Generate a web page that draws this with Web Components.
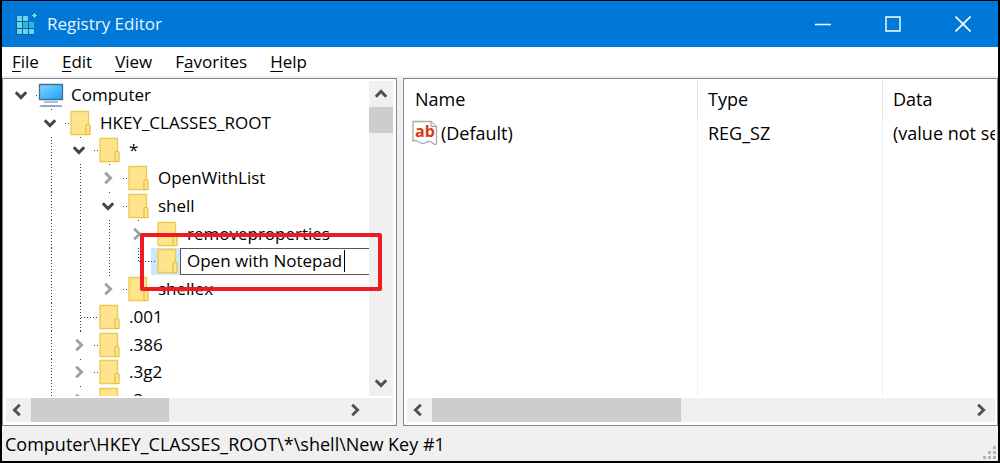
<!DOCTYPE html>
<html lang="en">
<head>
<meta charset="utf-8">
<title>Registry Editor</title>
<style>
html, body { height: 100%; margin: 0; }
body { font: 18px/24px "Open Sans", "Noto Sans", sans-serif; color: #000; }
</style>
</head>
<body>
<reg-window></reg-window>
<script>
const define = (name, html, setup) => customElements.define(name, class extends HTMLElement {
  constructor() {
    super();
    this.attachShadow({ mode: 'open' }).innerHTML = html;
  }
  connectedCallback() { if (setup) setup.call(this, this.shadowRoot); }
});

/* Chevron: direction up, down, left or right */
define('reg-chevron', `
<style>
:host { display: block; width: 14px; height: 14px; color: #505050; }
svg { display: block; }
:host([dir=right]) svg { transform: rotate(90deg); }
:host([dir=down]) svg { transform: rotate(180deg); }
:host([dir=left]) svg { transform: rotate(270deg); }
</style>
<svg width="14" height="14" viewBox="0 0 14 14" fill="none" stroke="currentColor" stroke-width="2.9"><path d="M1.8 9.8 7 4.4l5.2 5.4"/></svg>`);

define('reg-titlebar', `
<style>
:host { display: flex; align-items: center; height: 46px; background: #0078d7; color: #fff; padding-left: 12px; box-sizing: border-box; font-size: 17px; }
h1 { font: inherit; margin: 0 0 0 9px; flex: 1; color: #e9f4ff; }
button { width: 70px; height: 45px; border: 0; padding: 0; background: none; display: grid; place-items: center; }
svg { display: block; }
</style>
<svg width="24" height="26" viewBox="0 0 24 26">
  <path fill="#12618e" d="M2 5h12v7h6v12H2z"/>
  <g fill="#63d6f6"><path d="M3 5h5v5H3zM9 5h5v5H9zM3 11h5v6H3zM3 18h5v5H3zM9 18h5v5H9zM15 18h5v5h-5z"/></g>
  <g fill="#2fb4e8"><path d="M9 11h5v6H9zM15 11h5v6h-5z"/></g>
  <path d="M20.500 1.500 23.500 4.500l-3 3-3-3z" fill="#6bdcf8" stroke="#12618e" stroke-width="1"/>
</svg>
<h1>Registry Editor</h1>
<button aria-label="Minimize"><svg width="16" height="16"><path d="M0 8.500h16" stroke="#fff" stroke-width="1.500"/></svg></button>
<button aria-label="Maximize"><svg width="16" height="16" fill="none"><path d="M1 1h14v14H1z" stroke="#fff" stroke-width="1.400"/></svg></button>
<button aria-label="Close"><svg width="16" height="16"><path d="M.5.5l15 15M15.500.5l-15 15" stroke="#fff" stroke-width="1.600"/></svg></button>`);

define('reg-menubar', `
<style>
:host { display: flex; align-items: center; gap: 23px; height: 31px; padding-left: 10px; background: #fff; border-bottom: 2px solid #f0f0f0; box-sizing: border-box; font-size: 17px; }
button { font: inherit; color: inherit; border: 0; padding: 0; background: none; }
u { text-decoration-thickness: 1px; text-underline-offset: 3px; }
</style>
<button><u>F</u>ile</button><button><u>E</u>dit</button><button><u>V</u>iew</button><button>F<u>a</u>vorites</button><button><u>H</u>elp</button>`);

define('reg-scrollbar', `
<style>
:host { display: flex; align-items: center; height: 24px; background: #f0f0f0; }
button { flex: none; width: 25px; height: 24px; border: 0; padding: 0 3px 0 0; background: none; display: grid; place-items: center; }
.track { flex: 1; align-self: stretch; }
.thumb { background: #cdcdcd; width: var(--thumb); height: 100%; }
:host([vertical]) { flex-direction: column; width: 24px; height: auto; }
:host([vertical]) .thumb { width: auto; height: var(--thumb); }
:host([vertical]) button { width: 24px; height: 26px; padding: 0; }
</style>
<button><reg-chevron></reg-chevron></button>
<div class="track"><div class="thumb"></div></div>
<button><reg-chevron></reg-chevron></button>`, function (root) {
  const v = this.hasAttribute('vertical');
  const names = v ? ['up', 'down'] : ['left', 'right'];
  root.querySelectorAll('button').forEach((b, i) => {
    b.setAttribute('aria-label', 'Scroll ' + names[i]);
    b.firstElementChild.setAttribute('dir', names[i]);
  });
});

/* One key of the tree. level: depth; guides: depths with a through line;
   state: open, closed or leaf */
define('reg-key', `
<style>
:host { display: flex; align-items: stretch; white-space: nowrap; min-height: 0; }
.cell { flex: none; width: 29px; box-sizing: border-box; position: relative; display: grid; place-items: center; }
.line { background: repeating-linear-gradient(#444 0 1px, transparent 1px 3px) 16px 0 / 1px 100% no-repeat; }
.end { background-size: 1px 50%; }
.stub::after { content: ""; position: absolute; right: -6px; top: 50%; width: 5px; height: 1px;
  background: repeating-linear-gradient(90deg, #444 0 1px, transparent 1px 3px); }
.leaf::after { right: -5px; width: 17px; }
.tick { background: linear-gradient(#444, #444) 16px 0 / 1px 1px no-repeat; }
.icon { flex: none; width: 29px; display: flex; align-items: center; padding-left: 6px; box-sizing: border-box; }
.icon svg { display: block; flex: none; }
.pc { padding-left: 3px; }
.label { align-self: center; padding-left: 7px; }
:host([editing]) .icon { background: #cce8ff; }
:host([editing]) .label { flex: 1; align-self: stretch; padding: 0; display: flex; }
reg-chevron { color: #444; }
reg-chevron[dir=right] { color: #a0a0a0; }
</style>
<div class="icon"></div><div class="label"><slot></slot></div>`, function (root) {
  const level = +this.getAttribute('level');
  const guides = (this.getAttribute('guides') || '').split(',').map(Number);
  const state = this.getAttribute('state');
  const icon = root.querySelector('.icon');
  for (let i = 0; i <= level; i++) {
    const c = document.createElement('div');
    c.className = 'cell';
    if (i && guides.includes(i)) c.classList.add('line');
    if (i === level) {
      c.classList.add('stub');
      if (state === 'leaf') {
        c.classList.add('leaf');
        if (this.hasAttribute('last')) c.classList.add('end');
      } else {
        if (i) c.classList.add('tick');
        const v = document.createElement('reg-chevron');
        v.setAttribute('dir', state === 'open' ? 'down' : 'right');
        c.append(v);
      }
    }
    root.insertBefore(c, icon);
  }
  if (level === 0) {
    icon.classList.add('pc');
    icon.innerHTML = `<svg width="26" height="26" viewBox="0 0 26 26">
      <defs><linearGradient id="s" x2="1" y2="1"><stop stop-color="#8bd4ff"/><stop offset=".5" stop-color="#4fbcff"/><stop offset="1" stop-color="#28a0f4"/></linearGradient></defs>
      <path d="M1.500 2.500h23v15h-23z" fill="url(#s)" stroke="#3b7298" stroke-width="1.300"/>
      <path d="M6 20h14" stroke="#98aec0" stroke-width="1.500"/><path d="M8 19l2-1h6l2 1z" fill="#c7d8e5"/>
      <path d="M3 23h20l2 2H1z" fill="#91abc0"/></svg>`;
  } else {
    icon.innerHTML = `<svg width="21" height="26" viewBox="0 0 21 26">
      <path d="M1 1.500h17.500v23H1z" fill="#ffe48f" stroke="#efc94c" stroke-width="1.300"/>
      <path d="M16 24.500v-8.500q0-1.500 1.200-1.500h1.500q1.300 0 1.300 1.500v8.500z" fill="#ffe48f" stroke="#e7bd38" stroke-width="1.200"/></svg>`;
  }
});

define('reg-rename', `
<style>
:host { flex: 1; display: flex; align-items: center; background: #fff; border: 1px solid #555; border-right: 0; padding-left: 6px; }
input { font: inherit; color: inherit; width: 157px; border: 0; padding: 0; outline: 0; background: none; height: 24px; box-sizing: border-box; }
i { width: 1px; height: 22px; background: #000; }
</style>
<input aria-label="Key name" value="Open with Notepad"><i></i>`);

define('reg-tree', `
<style>
:host { display: grid; grid-template: minmax(0, 1fr) 24px / minmax(0, 1fr) 24px; position: relative; background: #fff; border: 1px solid #828790; padding: 2px 3px 3px 3px; box-sizing: border-box; row-gap: 2px; font-size: 17px; }
.view { overflow: hidden; }
.keys { display: grid; grid-template-rows: repeat(12, 1fr); height: 333px; }
.v { --thumb: 26px; }
.h { --thumb: 138px; }
.corner { background: #f0f0f0; }
.mark { position: absolute; left: 137px; right: 14px; top: 154px; height: 58px; border: 4px solid #ed1c24; border-radius: 2px; box-sizing: border-box; pointer-events: none; }
</style>
<div class="view"><div class="keys">
  <reg-key level="0" state="open">Computer</reg-key>
  <reg-key level="1" state="open">HKEY_CLASSES_ROOT</reg-key>
  <reg-key level="2" guides="1" state="open">*</reg-key>
  <reg-key level="3" guides="1,2" state="closed">OpenWithList</reg-key>
  <reg-key level="3" guides="1,2" state="open">shell</reg-key>
  <reg-key level="4" guides="1,2,3" state="closed">removeproperties</reg-key>
  <reg-key level="4" guides="1,2,3,4" state="leaf" last editing><reg-rename></reg-rename></reg-key>
  <reg-key level="3" guides="1,2" state="closed">shellex</reg-key>
  <reg-key level="2" guides="1,2" state="leaf">.001</reg-key>
  <reg-key level="2" guides="1" state="closed">.386</reg-key>
  <reg-key level="2" guides="1" state="closed">.3g2</reg-key>
  <reg-key level="2" guides="1" state="closed">.3</reg-key>
</div></div>
<reg-scrollbar class="v" vertical></reg-scrollbar>
<reg-scrollbar class="h"></reg-scrollbar>
<div class="corner"></div>
<div class="mark"></div>`);

define('reg-values', `
<style>
:host { display: flex; flex-direction: column; gap: 2px; background: #fff; border: 1px solid #828790; padding: 2px 2px 3px 3px; box-sizing: border-box; min-width: 0; }
.view { flex: 1; min-height: 0; overflow: hidden; }
table { width: 100%; height: 100%; table-layout: fixed; border-collapse: separate; border-spacing: 0; }
th, td { font-weight: normal; text-align: left; padding: 0 0 0 10px; white-space: nowrap; overflow: hidden; box-sizing: border-box; border-right: 1px solid #e8f2fc; }
th { height: 36px; border-color: #e2e2e2; }
td { height: 31px; }
tr > :last-child { border-right: 0; }
.fill td { height: auto; }
col.n { width: 291px; } col.t { width: 185px; }
th:first-child { padding-left: 8px; }
td:first-child { padding-left: 5px; }
.name { display: flex; align-items: center; gap: 3px; }
reg-scrollbar { flex: none; --thumb: 249px; }
svg { display: block; }
svg text { font: bold 16px "Open Sans", sans-serif; fill: #d83b12; }
</style>
<div class="view"><table>
<colgroup><col class="n"><col class="t"><col></colgroup>
<thead><tr><th>Name</th><th>Type</th><th>Data</th></tr></thead>
<tbody><tr><td><div class="name"><svg width="26" height="26" viewBox="0 0 26 26">
<path d="M1 1.500h18l5.500 5v17.500q-2 1-4-1t-4-1.500-3.500 1.500-4 0-4-2-4 0z" fill="#fff" stroke="#a9a9a9" stroke-width="1.300"/><path d="M19 1.500v5h5.500" fill="#eee" stroke="#999"/>
<text x="3" y="17">ab</text></svg><span>(Default)</span></div></td><td>REG_SZ</td><td>(value not set)</td></tr>
<tr class="fill"><td></td><td></td><td></td></tr></tbody>
</table></div>
<reg-scrollbar></reg-scrollbar>`);

define('reg-status', `
<style>
:host { display: flex; align-items: center; justify-content: space-between; height: 35px; padding: 0 0 0 3px; background: #f0f0f0; box-sizing: border-box; }
svg { align-self: flex-end; margin: 0 2px 2px 0; }
</style>
<span><slot></slot></span>
<svg width="13" height="13" fill="#b5b5b5"><path d="M10 0h3v3h-3zM5 5h3v3H5zM10 5h3v3h-3zM0 10h3v3H0zM5 10h3v3H5zM10 10h3v3h-3z"/></svg>`);

define('reg-window', `
<style>
:host { display: flex; flex-direction: column; height: 100vh; box-sizing: border-box; border: 2px solid #000; border-top-width: 1px; background: #f0f0f0; overflow: hidden; }
.panes { flex: 1; min-height: 0; display: grid; grid-template: minmax(0, 1fr) / 395px minmax(0, 1fr); column-gap: 6px; }
reg-titlebar, reg-menubar, reg-status { flex: none; }
</style>
<reg-titlebar></reg-titlebar>
<reg-menubar></reg-menubar>
<div class="panes"><reg-tree></reg-tree><reg-values></reg-values></div>
<reg-status>Computer\\HKEY_CLASSES_ROOT\\*\\shell\\New Key #1</reg-status>`);
</script>
</body>
</html>
